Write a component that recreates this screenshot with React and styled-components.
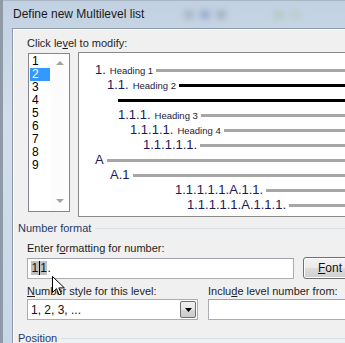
import React from 'react';
import styled, { createGlobalStyle } from 'styled-components';

const GlobalStyle = createGlobalStyle`
	html, body {
		margin: 0;
		padding: 0;
	}
	body {
		background: #f0f0f0;
		font-family: "Liberation Sans", Arial, sans-serif;
	}
`;

const levels = ['1', '2', '3', '4', '5', '6', '7', '8', '9'];

const previewRows = [
	{ indent: 16, num: '1.', head: 'Heading 1' },
	{ indent: 28, num: '1.1.', head: 'Heading 2', selected: true },
	{ indent: 39, selected: true },
	{ indent: 39, num: '1.1.1.', head: 'Heading 3' },
	{ indent: 51, num: '1.1.1.1.', head: 'Heading 4' },
	{ indent: 64, num: '1.1.1.1.1.' },
	{ indent: 16, num: 'A' },
	{ indent: 31, num: 'A.1' },
	{ indent: 96, num: '1.1.1.1.1.A.1.1.' },
	{ indent: 108, num: '1.1.1.1.1.A.1.1.1.' },
];

const App = () => (
	<>
		<GlobalStyle />
		<Window>
			<TitleBar>
				<Caption>Define new Multilevel list</Caption>
				<GlassBlobs>
					<Blob color="#8d99a8" />
					<Blob color="#6f86b8" />
					<Blob color="#8a94a2" />
					<Spacer />
					<Blob color="#a9c4a8" />
					<Blob color="#b8c9b6" />
				</GlassBlobs>
			</TitleBar>
			<Body>
				<Indented>
					<Label>
						Click le<u>v</u>el to modify:
					</Label>
					<LevelRow>
						<ListBox>
							<Items>
								{levels.map((l) => (
									<Item key={l} active={l === '2'}>
										{l}
									</Item>
								))}
							</Items>
							<ScrollTrack>
								<Arrow />
								<Arrow down />
							</ScrollTrack>
						</ListBox>
						<Preview>
							{previewRows.map((r, i) => (
								<PreviewRow key={i} indent={r.indent}>
									{r.num && <Num>{r.num}</Num>}
									{r.head && <Head>{r.head}</Head>}
									<Rule selected={r.selected} />
								</PreviewRow>
							))}
						</Preview>
					</LevelRow>
				</Indented>

				<GroupHeader>
					<span>Number format</span>
					<GroupLine />
				</GroupHeader>

				<Indented>
					<Label spaced>
						Enter f<u>o</u>rmatting for number:
					</Label>
					<FieldRow>
						<TextField width="267px">
							<Shade>1</Shade>
							<Caret />
							<Shade>1</Shade>.
						</TextField>
						<Button>
							<u>F</u>ont
						</Button>
					</FieldRow>
					<Columns>
						<Column width="171px">
							<Label spaced>
								<u>N</u>umber style for this level:
							</Label>
							<Select>
								<span>1, 2, 3, ...</span>
								<DropButton>
									<svg width="7" height="4" viewBox="0 0 7 4">
										<path d="M0 0h7L3.5 4z" fill="#000" />
									</svg>
								</DropButton>
							</Select>
						</Column>
						<Column>
							<Label spaced>
								Inclu<u>d</u>e level number from:
							</Label>
							<TextField width="200px" />
						</Column>
					</Columns>
				</Indented>

				<GroupHeader tall>
					<span>Position</span>
					<GroupLine />
				</GroupHeader>
			</Body>
			<Pointer width="13" height="20" viewBox="0 0 13 20">
				<path
					d="M0.5 0.5v16l4-3.8 2.6 6 2.3-1-2.6-5.8h5.6z"
					fill="#fff"
					stroke="#000"
					strokeWidth="1"
					strokeLinejoin="round"
				/>
			</Pointer>
		</Window>
	</>
);

const Window = styled.div`
	position: relative;
	width: 345px;
	height: 343px;
	overflow: hidden;
	box-sizing: border-box;
	display: flex;
	flex-direction: column;
	border-left: 3px solid #8f9aa6;
	background: linear-gradient(180deg, #c2d1e2 0%, #d2deea 35%, #c8d7e7 100%);
`;

const TitleBar = styled.div`
	height: 28px;
	flex-shrink: 0;
	display: flex;
	align-items: center;
	padding-left: 10px;
	box-sizing: border-box;
	border-top: 1px solid #aab6c3;
`;

const Caption = styled.span`
	font-size: 12px;
	color: #1b1b1b;
	padding-bottom: 1px;
`;

const GlassBlobs = styled.div`
	display: flex;
	align-items: center;
	gap: 6px;
	margin-left: 40px;
	opacity: 0.55;
	filter: blur(3px);
`;

const Blob = styled.div`
	width: 10px;
	height: 9px;
	border-radius: 4px;
	background: ${(p) => p.color};
`;

const Spacer = styled.div`
	width: 36px;
`;

const Body = styled.div`
	flex: 1;
	width: 420px;
	margin-left: 9px;
	padding-left: 5px;
	background: #f0f0f0;
	border-top: 1px solid #8c9bac;
	border-left: 1px solid #8c9bac;
	box-shadow: inset 1px 1px 0 #fbfbfb;
	display: flex;
	flex-direction: column;
`;

const Indented = styled.div`
	padding-left: 9px;
	display: flex;
	flex-direction: column;
`;

const Label = styled.div`
	font-size: 11px;
	line-height: 16px;
	color: #1e1e1e;
	margin-top: ${(p) => (p.spaced ? '4px' : '6px')};
	white-space: nowrap;

	u {
		text-decoration: underline;
		text-underline-offset: 1px;
	}
`;

const LevelRow = styled.div`
	display: flex;
	align-items: flex-start;
	margin-top: 1px;
`;

const ListBox = styled.div`
	width: 42px;
	height: 159px;
	margin-top: 1px;
	margin-left: 1px;
	box-sizing: border-box;
	border: 1px solid #828790;
	background: #fff;
	display: flex;
`;

const Items = styled.div`
	width: 20px;
	padding: 1px 0 0 1px;
`;

const Item = styled.div`
	font-size: 12px;
	line-height: 13px;
	padding-left: 2px;
	color: ${(p) => (p.active ? '#fff' : '#000')};
	background: ${(p) => (p.active ? '#3399ff' : 'transparent')};
`;

const ScrollTrack = styled.div`
	flex: 1;
	display: flex;
	flex-direction: column;
	justify-content: space-between;
	align-items: center;
	padding: 7px 0 8px;
	background: #fcfcfc;
`;

const Arrow = styled.div`
	width: 0;
	height: 0;
	border-left: 4px solid transparent;
	border-right: 4px solid transparent;
	${(p) =>
		p.down
			? 'border-top: 4px solid #a3a3a3;'
			: 'border-bottom: 4px solid #a3a3a3;'}
`;

const Preview = styled.div`
	flex: 1;
	height: 165px;
	margin-left: 8px;
	box-sizing: border-box;
	border: 1px solid #8a8a8a;
	background: #fff;
	padding-top: 9px;
`;

const PreviewRow = styled.div`
	display: flex;
	align-items: center;
	height: 15px;
	padding-left: ${(p) => p.indent}px;
`;

const Num = styled.span`
	font-size: 13px;
	color: #1a1a5a;
	margin-right: 3px;
	white-space: nowrap;
`;

const Head = styled.span`
	font-size: 9.5px;
	color: #1a1a3a;
	margin: 1px 3px 0 1px;
	white-space: nowrap;
`;

const Rule = styled.div`
	flex: 1;
	height: 3px;
	margin-top: 1px;
	background: ${(p) => (p.selected ? '#000' : '#a6a6a6')};
`;

const GroupHeader = styled.div`
	display: flex;
	align-items: center;
	font-size: 11px;
	line-height: 16px;
	color: #1e3a6e;
	margin-top: ${(p) => (p.tall ? '10px' : '3px')};

	span {
		white-space: nowrap;
	}
`;

const GroupLine = styled.div`
	flex: 1;
	height: 1px;
	margin-left: 4px;
	background: #d5dfe5;
`;

const FieldRow = styled.div`
	display: flex;
	align-items: center;
	gap: 9px;
	margin-top: 1px;
`;

const TextField = styled.div`
	width: ${(p) => p.width};
	height: 21px;
	box-sizing: border-box;
	border: 1px solid #abadb3;
	border-top-color: #a0a2a9;
	background: #fff;
	display: flex;
	align-items: center;
	padding-left: 3px;
	font-size: 12px;
	color: #111;
`;

const Shade = styled.span`
	background: #c0c0c0;
	line-height: 14px;
	padding: 0 0.5px;
`;

const Caret = styled.span`
	width: 1px;
	height: 14px;
	background: #000;
`;

const Button = styled.div`
	width: 70px;
	height: 22px;
	box-sizing: border-box;
	border: 1px solid #707070;
	border-radius: 3px;
	background: linear-gradient(180deg, #f2f2f2 0%, #ebebeb 50%, #dddddd 51%, #cfcfcf 100%);
	box-shadow: inset 0 0 0 1px #fcfcfc;
	font-size: 12px;
	line-height: 20px;
	padding-left: 14px;
	color: #111;
`;

const Columns = styled.div`
	display: flex;
	gap: 10px;
`;

const Column = styled.div`
	width: ${(p) => p.width || 'auto'};
	display: flex;
	flex-direction: column;
`;

const Select = styled.div`
	height: 21px;
	box-sizing: border-box;
	border: 1px solid #abadb3;
	background: #fff;
	display: flex;
	align-items: center;
	justify-content: space-between;
	padding: 0 1px 0 3px;
	font-size: 12px;
	color: #111;
`;

const DropButton = styled.div`
	width: 16px;
	height: 17px;
	box-sizing: border-box;
	border: 1px solid #707070;
	border-radius: 2px;
	background: linear-gradient(180deg, #f2f2f2 0%, #e6e6e6 50%, #d6d6d6 51%, #cbcbcb 100%);
	display: flex;
	align-items: center;
	justify-content: center;
`;

const Pointer = styled.svg`
	position: absolute;
	left: 49px;
	top: 276px;
`;

export default App;
